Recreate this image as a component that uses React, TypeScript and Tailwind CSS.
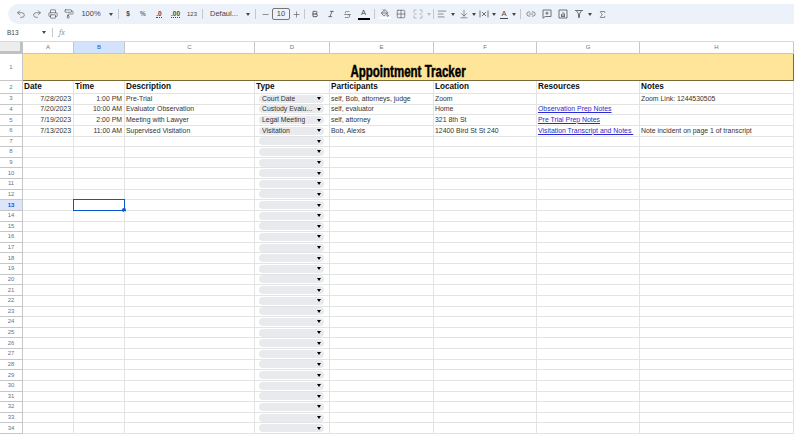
import React from "react";
import { Undo2, Redo2, Printer, PaintRoller, Minus, Plus, Bold, Italic, Strikethrough, PaintBucket, Grid2x2, AlignLeft, ArrowDownToLine, Link2, Sigma } from "lucide-react";

const cols = [
  { name: "A", w: "w-[51px]" },
  { name: "B", w: "w-[51px]" },
  { name: "C", w: "w-[130px]" },
  { name: "D", w: "w-[75px]" },
  { name: "E", w: "w-[104px]" },
  { name: "F", w: "w-[103px]" },
  { name: "G", w: "w-[103px]" },
  { name: "H", w: "w-[154px]" },
];

type Row = { date?: string; time?: string; desc?: string; type?: string; who?: string; where?: string; link?: string; notes?: string };

const data: Row[] = [
  { date: "7/28/2023", time: "1:00 PM", desc: "Pre-Trial", type: "Court Date", who: "self, Bob, attorneys, judge", where: "Zoom", notes: "Zoom Link: 1244530505" },
  { date: "7/20/2023", time: "10:00 AM", desc: "Evaluator Observation", type: "Custody Evalu...", who: "self, evaluator", where: "Home", link: "Observation Prep Notes" },
  { date: "7/19/2023", time: "2:00 PM", desc: "Meeting with Lawyer", type: "Legal Meeting", who: "self, attorney", where: "321 8th St", link: "Pre Trial Prep Notes" },
  { date: "7/13/2023", time: "11:00 AM", desc: "Supervised Visitation", type: "Visitation", who: "Bob, Alexis", where: "12400 Bird St St 240", link: "Visitation Transcript and Notes ", notes: "Note incident on page 1 of transcript" },
];

const rows: Row[] = [...data, ...Array.from({ length: 28 }, () => ({}))];

function Caret({ className = "" }: { className?: string }) {
  return <span className={`w-0 h-0 border-x-[2.5px] border-x-transparent border-t-[3px] border-t-[#444746] ${className}`} />;
}

function Sep() {
  return <div className="w-px h-[10px] bg-[#c7c7c7] mx-[2px] shrink-0" />;
}

function Tool({ children, w = "w-4" }: { children: React.ReactNode; w?: string }) {
  return <div className={`${w} h-full flex items-center justify-center shrink-0 text-[#444746]`}>{children}</div>;
}

const ic = { size: 10, strokeWidth: 1.4 };

function MergeIcon() {
  return (
    <svg width="10" height="10" viewBox="0 0 10 10" fill="none" stroke="#b4b8bd" strokeWidth="1">
      <path d="M1 1h2.5M1 1v2.5M9 1H6.5M9 1v2.5M1 9h2.5M1 9V6.5M9 9H6.5M9 9V6.5M1 5h2.5M6.5 5H9" />
    </svg>
  );
}

function WrapIcon() {
  return (
    <svg width="10" height="10" viewBox="0 0 10 10" fill="none" stroke="#5f6368" strokeWidth="0.9">
      <path d="M1 1.5v7M9 1.5v7M3 3l2 2-2 2M7 3L5 5l2 2" />
    </svg>
  );
}

function CommentIcon() {
  return (
    <svg width="10" height="10" viewBox="0 0 10 10" fill="none" stroke="#5f6368" strokeWidth="0.9">
      <path d="M1 1h8v6.5H3.2L1 9.2zM5 2.6v3.2M3.4 4.2h3.2" />
    </svg>
  );
}

function ChartIcon() {
  return (
    <svg width="10" height="10" viewBox="0 0 10 10" fill="none" stroke="#5f6368" strokeWidth="0.9">
      <path d="M1 1h8v8H1zM3 7.5h4M3.5 7V5M5 7V3M6.5 7V4.5" />
    </svg>
  );
}

function FilterIcon() {
  return (
    <svg width="10" height="10" viewBox="0 0 10 10" fill="none" stroke="#5f6368" strokeWidth="0.9">
      <path d="M1 1.5h8M2.5 1.5L4.5 5v3.5h1V5l2-3.5" />
    </svg>
  );
}

function Toolbar() {
  return (
    <div className="h-6 pt-1 pl-2">
      <div className="h-5 bg-[#edf2fa] rounded-l-full pl-[5px] flex items-center text-[#444746]">
        <Tool><Undo2 {...ic} /></Tool>
        <Tool><Redo2 {...ic} /></Tool>
        <Tool><Printer {...ic} /></Tool>
        <Tool><PaintRoller {...ic} /></Tool>
        <Tool w="w-[28px]"><span className="text-[7.5px]">100%</span></Tool>
        <Tool w="w-[11px]"><Caret /></Tool>
        <Sep />
        <Tool w="w-[14px]"><span className="font-bold text-[6.5px]">$</span></Tool>
        <Tool><span className="font-bold text-[6.5px] text-[#6b6e70]">%</span></Tool>
        <Tool><span className="font-bold text-[6.5px] border-b border-dotted border-[#444746] leading-[7px]">.0</span></Tool>
        <Tool w="w-[17px]"><span className="font-bold text-[6.5px] border-b border-dotted border-[#444746] leading-[7px]">.00</span></Tool>
        <Tool><span className="text-[6px]">123</span></Tool>
        <Sep />
        <Tool w="w-[38px]"><span className="text-[7.5px]">Defaul...</span></Tool>
        <Tool w="w-[10px]"><Caret /></Tool>
        <Sep />
        <Tool w="w-[14px]"><Minus size={9} strokeWidth={1.5} /></Tool>
        <div className="w-[18px] h-[12px] border border-[#747775] rounded-[2px] flex items-center justify-center text-[7.5px] shrink-0">10</div>
        <Tool w="w-[12px]"><Plus size={9} strokeWidth={1.5} /></Tool>
        <Sep />
        <Tool><Bold size={8} strokeWidth={2.6} /></Tool>
        <Tool><Italic size={8} strokeWidth={2.2} /></Tool>
        <Tool><Strikethrough size={9} strokeWidth={1.5} /></Tool>
        <Tool w="w-[17px]">
          <div className="flex flex-col items-center">
            <span className="text-[7.5px] leading-[8px]">A</span>
            <div className="w-3 h-[2px] bg-black mt-[1px]" />
          </div>
        </Tool>
        <Sep />
        <Tool>
          <div className="flex flex-col items-center">
            <PaintBucket size={8} strokeWidth={2} />
            <div className="w-3 h-[2px] bg-white" />
          </div>
        </Tool>
        <Tool><Grid2x2 {...ic} /></Tool>
        <Tool w="w-[18px]"><MergeIcon /></Tool>
        <Tool w="w-[4px]"><Caret className="opacity-30" /></Tool>
        <Sep />
        <Tool w="w-[12px]"><AlignLeft {...ic} /></Tool>
        <Tool w="w-[10px]"><Caret /></Tool>
        <Tool w="w-[12px]"><ArrowDownToLine {...ic} /></Tool>
        <Tool w="w-[8px]"><Caret /></Tool>
        <Tool w="w-[12px]"><WrapIcon /></Tool>
        <Tool w="w-[8px]"><Caret /></Tool>
        <Tool w="w-[12px]">
          <div className="flex flex-col items-center">
            <span className="text-[7.5px] leading-[8px]">A</span>
            <div className="w-2 h-px bg-[#444746]" />
          </div>
        </Tool>
        <Tool w="w-[8px]"><Caret /></Tool>
        <Sep />
        <Tool><Link2 {...ic} /></Tool>
        <Tool><CommentIcon /></Tool>
        <Tool><ChartIcon /></Tool>
        <Tool><FilterIcon /></Tool>
        <Tool w="w-[6px]"><Caret /></Tool>
        <Tool w="w-[18px]"><Sigma size={9} strokeWidth={1.6} /></Tool>
      </div>
    </div>
  );
}

function FormulaBar() {
  return (
    <div className="h-[18px] flex items-center text-[6.5px] text-[#444746] border-b border-[#d9d9d9]">
      <div className="w-[42px] pl-[7px]">B13</div>
      <Caret className="mr-[6px]" />
      <div className="w-px h-[9px] bg-[#c7c7c7] mr-[6px]" />
      <span className="italic font-serif text-[8px] text-[#9aa0a6]">fx</span>
    </div>
  );
}

function Cell({ w, className = "", children }: { w: string; className?: string; children?: React.ReactNode }) {
  return (
    <div className={`${w} shrink-0 h-full border-r border-b border-[#e2e3e3] pl-[1px] pr-[2px] flex items-center overflow-hidden whitespace-nowrap ${className}`}>
      {children}
    </div>
  );
}

function RowHead({ n, active }: { n: number; active?: boolean }) {
  return (
    <div className={`w-[23px] shrink-0 h-full border-r border-b border-[#c7c7c7] flex items-center justify-center text-[6px] ${active ? "bg-[#dbe6fb] text-[#0b57d0] font-bold" : "text-[#6f7378]"}`}>
      {n}
    </div>
  );
}

function Sheet() {
  return (
    <div>
      <div className="flex h-3">
        <div className="w-[23px] shrink-0 bg-[#eceded] border-r-[3px] border-b-[3px] border-[#bfc1c3]" />
        {cols.map((c) => (
          <div key={c.name} className={`${c.w} shrink-0 border-r border-b border-[#c7c7c7] flex items-center justify-center text-[6px] ${c.name === "B" ? "bg-[#d3e3fd] text-[#0b57d0]" : "text-[#6f7378]"}`}>
            {c.name}
          </div>
        ))}
      </div>

      <div className="flex h-[27px]">
        <RowHead n={1} />
        <div className="w-[771px] bg-[#ffe599] border-b border-r border-[#7a6a35] flex items-end justify-center overflow-hidden">
          <span className="font-bold text-[16px] leading-[16px] text-black scale-x-[0.72] whitespace-nowrap [-webkit-text-stroke:0.5px_black]">Appointment Tracker</span>
        </div>
      </div>

      <div className="flex h-[13px]">
        <RowHead n={2} />
        {["Date", "Time", "Description", "Type", "Participants", "Location", "Resources", "Notes"].map((h, i) => (
          <Cell key={h} w={cols[i].w} className="font-bold text-[8.2px] text-[#111] pt-[1px]">{h}</Cell>
        ))}
      </div>

      {rows.map((r, i) => {
        const n = i + 3;
        return (
          <div key={n} className="flex h-[10.63px] text-[6.9px] text-[#333]">
            <RowHead n={n} active={n === 13} />
            <Cell w={cols[0].w} className="justify-end">{r.date}</Cell>
            <Cell w={cols[1].w} className={`justify-end relative ${n === 13 ? "overflow-visible" : ""}`}>
              {r.time}
              {n === 13 && (
                <>
                  <div className="absolute -left-px -top-px -right-px -bottom-px border-[1.5px] border-[#0b57d0]" />
                  <div className="absolute -right-[2px] -bottom-[2px] w-[4px] h-[4px] rounded-full bg-[#0b57d0]" />
                </>
              )}
            </Cell>
            <Cell w={cols[2].w}>{r.desc}</Cell>
            <Cell w={cols[3].w} className="!px-[4px]">
              <div className="w-[65px] h-[8px] rounded-full bg-[#e8eaed] flex items-center justify-between pl-[3px] pr-[3px]">
                <span className="truncate">{r.type}</span>
                <span className="shrink-0 w-0 h-0 border-x-[2.5px] border-x-transparent border-t-[3px] border-t-black" />
              </div>
            </Cell>
            <Cell w={cols[4].w}>{r.who}</Cell>
            <Cell w={cols[5].w}>{r.where}</Cell>
            <Cell w={cols[6].w}>
              {r.link && <span className="text-[#2a2ad0] underline whitespace-pre">{r.link}</span>}
            </Cell>
            <Cell w={cols[7].w}>{r.notes}</Cell>
          </div>
        );
      })}
    </div>
  );
}

export default function App() {
  return (
    <div className="w-[794px] h-[435px] overflow-hidden bg-white [font-family:'Liberation_Sans',Arial,sans-serif]">
      <Toolbar />
      <FormulaBar />
      <Sheet />
    </div>
  );
}
